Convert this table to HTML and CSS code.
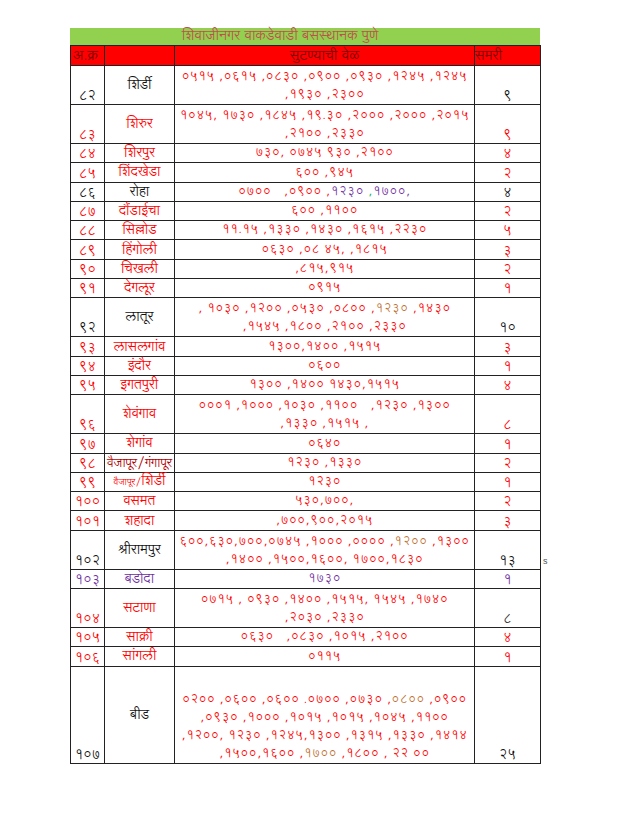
FILE: index.html
```html
<!DOCTYPE html>
<html lang="mr">
<head>
<meta charset="utf-8">
<title>शिवाजीनगर वाकडेवाडी बसस्थानक पुणे</title>
<link rel="stylesheet" href="styles.css">
</head>
<body>
<div class="sheet">
  <div class="title">शिवाजीनगर वाकडेवाडी बसस्थानक पुणे</div>
  <table class="grid">
    <colgroup><col class="c1"><col class="c2"><col class="c3"><col class="c4"></colgroup>
    <tr class="head"><td class="hn">अ.क्र</td><td></td><td class="ht">सुटण्याची वेळ</td><td class="hs">समरी</td></tr>
    <tr class="r2 blk"><td class="n">८२</td><td class="nm">शिर्डी</td><td class="t">०५१५ ,०६१५ ,०८३० ,०९०० ,०९३० ,१२४५ ,१२४५<br>,१९३० ,२३००</td><td class="s">९</td></tr>
    <tr class="r2"><td class="n">८३</td><td class="nm">शिरुर</td><td class="t">१०४५, १७३० ,१८४५ ,१९.३० ,२००० ,२००० ,२०१५<br>,२१०० ,२३३०</td><td class="s">९</td></tr>
    <tr class="r1"><td class="n">८४</td><td class="nm">शिरपुर</td><td class="t">७३०, ०७४५ ९३० ,२१००</td><td class="s">४</td></tr>
    <tr class="r1"><td class="n">८५</td><td class="nm">शिंदखेडा</td><td class="t">६०० ,९४५</td><td class="s">२</td></tr>
    <tr class="r1 blk"><td class="n">८६</td><td class="nm">रोहा</td><td class="t">०७००&nbsp;&nbsp; ,०९०० ,<span class="pur">१२३०</span><span class="grn"> ,</span><span class="pur">१७००,</span></td><td class="s">४</td></tr>
    <tr class="r1"><td class="n">८७</td><td class="nm">दौंडाईचा</td><td class="t">६०० ,११००</td><td class="s">२</td></tr>
    <tr class="r1"><td class="n">८८</td><td class="nm">सिल्लोड</td><td class="t">११.१५ ,१३३० ,१४३० ,१६१५ ,२२३०</td><td class="s">५</td></tr>
    <tr class="r1"><td class="n">८९</td><td class="nm">हिंगोली</td><td class="t">०६३० ,०८ ४५, ,१८१५</td><td class="s">३</td></tr>
    <tr class="r1"><td class="n">९०</td><td class="nm">चिखली</td><td class="t">,८१५,९१५</td><td class="s">२</td></tr>
    <tr class="r1"><td class="n">९१</td><td class="nm">देगलूर</td><td class="t">०९१५</td><td class="s">१</td></tr>
    <tr class="r2 blk"><td class="n">९२</td><td class="nm">लातूर</td><td class="t">, १०३० ,१२०० ,०५३० ,०८०० ,<span class="brn">१२३०</span> ,१४३०<br>,१५४५ ,१८०० ,२१०० ,२३३०</td><td class="s">१०</td></tr>
    <tr class="r1"><td class="n">९३</td><td class="nm">लासलगांव</td><td class="t">१३००,१४०० ,१५१५</td><td class="s">३</td></tr>
    <tr class="r1"><td class="n">९४</td><td class="nm">इंदौर</td><td class="t">०६००</td><td class="s">१</td></tr>
    <tr class="r1"><td class="n">९५</td><td class="nm">इगतपुरी</td><td class="t">१३०० ,१४०० १४३०,१५१५</td><td class="s">४</td></tr>
    <tr class="r2"><td class="n">९६</td><td class="nm">शेवंगाव</td><td class="t">०००१ ,१००० ,१०३० ,११००&nbsp;&nbsp; ,१२३० ,१३००<br>,१३३० ,१५१५ ,</td><td class="s">८</td></tr>
    <tr class="r1"><td class="n">९७</td><td class="nm">शेगांव</td><td class="t">०६४०</td><td class="s">१</td></tr>
    <tr class="r1"><td class="n">९८</td><td class="nm dk narrow">वैजापूर/गंगापूर</td><td class="t">१२३० ,१३३०</td><td class="s">२</td></tr>
    <tr class="r1"><td class="n">९९</td><td class="nm"><span class="sm">वैजापूर/</span>शिर्डी</td><td class="t">१२३०</td><td class="s">१</td></tr>
    <tr class="r1"><td class="n">१००</td><td class="nm">वसमत</td><td class="t">५३०,७००,</td><td class="s">२</td></tr>
    <tr class="r1"><td class="n">१०१</td><td class="nm">शहादा</td><td class="t">,७००,९००,२०१५</td><td class="s">३</td></tr>
    <tr class="r2 blk"><td class="n">१०२</td><td class="nm">श्रीरामपुर</td><td class="t">६००,६३०,७००,०७४५ ,१००० ,०००० ,<span class="brn">१२००</span> ,१३००<br>,१४०० ,१५००,१६००, १७००,१८३०</td><td class="s">१३</td></tr>
    <tr class="r1 pur-row"><td class="n">१०३</td><td class="nm">बडोदा</td><td class="t">१७३०</td><td class="s">१</td></tr>
    <tr class="r2"><td class="n">१०४</td><td class="nm">सटाणा</td><td class="t">०७१५ , ०९३० ,१४०० ,१५१५, १५४५ ,१७४०<br>,२०३० ,२३३०</td><td class="s dark">८</td></tr>
    <tr class="r1"><td class="n">१०५</td><td class="nm">साक्री</td><td class="t">०६३०&nbsp;&nbsp; ,०८३० ,१०१५ ,२१००</td><td class="s">४</td></tr>
    <tr class="r1"><td class="n">१०६</td><td class="nm">सांगली</td><td class="t">०११५</td><td class="s">१</td></tr>
    <tr class="r5 blk"><td class="n">१०७</td><td class="nm">बीड</td><td class="t">०२०० ,०६०० ,०६०० .०७०० ,०७३० ,<span class="brn">०८००</span> ,०९००<br>,०९३० ,१००० ,१०१५ ,१०१५ ,१०४५ ,११००<br>,१२००, १२३० ,१२४५,१३०० ,१३१५ ,१३३० ,१४१४<br>,१५००,१६०० ,<span class="brn">१७००</span> ,१८०० , २२ ००</td><td class="s">२५</td></tr>
  </table>
  <span class="stray">s</span>
</div>
</body>
</html>
```
FILE: styles.css
```css
html, body {
  margin: 0;
  padding: 0;
  background: #ffffff;
}
body {
  font-family: "Lohit Devanagari", "Noto Sans Devanagari", sans-serif;
}
.sheet {
  position: relative;
  padding: 28px 0 0 70px;
  width: 470px;
}
.title {
  height: 17px;
  background: #92d050;
  color: #c0504d;
  text-align: center;
  font-size: 14px;
  line-height: 17px;
  padding-right: 50px;
}
.grid {
  border-collapse: collapse;
  table-layout: fixed;
  width: 470px;
}
.c1 { width: 34px; }
.c2 { width: 70px; }
.c3 { width: 300px; }
.c4 { width: 66px; }
.grid td {
  border: 1px solid #222;
  padding: 0;
  color: #f00;
  font-size: 12px;
  line-height: 15px;
  white-space: nowrap;
}
.head { height: 20px; }
.r1 { height: 19.3px; }
.r2 { height: 39px; }
.r5 { height: 97px; }
.head td {
  background: #ff0000;
  color: #7a0000;
  font-size: 14px;
  line-height: 16px;
  vertical-align: middle;
}
.hn { text-align: left; padding-left: 2px !important; }
.ht { text-align: center; }
.hs { text-align: left; }
.n {
  text-align: center;
  vertical-align: bottom;
  font-size: 13px !important;
}
.nm {
  text-align: center;
  vertical-align: middle;
  font-size: 13.5px !important;
  line-height: 14px !important;
}
.narrow { font-size: 12.5px !important; letter-spacing: -0.2px; }
.t {
  text-align: center;
  vertical-align: bottom;
  letter-spacing: 0.5px;
  line-height: 18px !important;
}
.s {
  text-align: center;
  vertical-align: bottom;
  font-size: 13px !important;
}
.blk .n, .blk .nm, .blk .s { color: #111; }
.dk { color: #b00000 !important; }
.dark { color: #333 !important; }
.sm { font-size: 9px; }
.pur { color: #7030a0; }
.grn { color: #00b050; }
.brn { color: #c07030; }
.pur-row td { color: #7030a0; }
.stray {
  position: absolute;
  left: 543px;
  top: 556px;
  font-size: 9px;
  color: #555;
  font-family: "Liberation Sans", sans-serif;
}
```
